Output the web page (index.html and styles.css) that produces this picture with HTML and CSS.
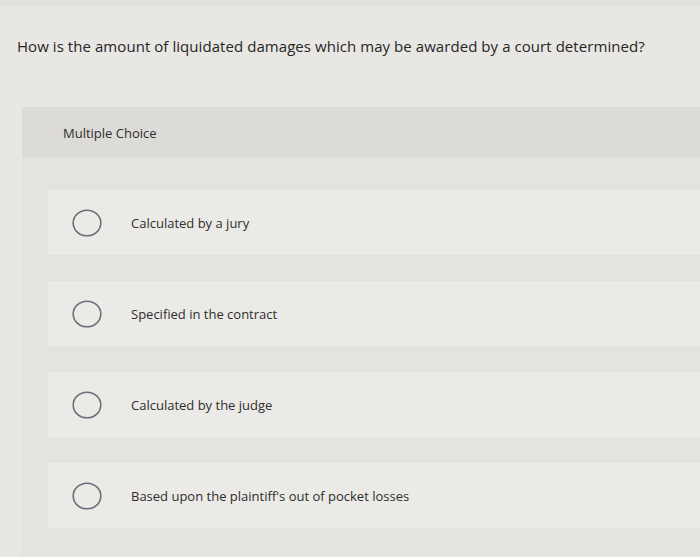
FILE: index.html
```html
<!DOCTYPE html>
<html>
<head>
<meta charset="utf-8">
<link rel="stylesheet" href="styles.css">
</head>
<body>
<div class="topstrip"></div>
<p class="question">How is the amount of liquidated damages which may be awarded by a court determined?</p>
<section class="panel">
  <div class="panel-header">Multiple Choice</div>
  <div class="options">
    <div class="option"><svg class="radio" width="30" height="28" viewBox="0 0 30 28"><ellipse cx="15" cy="14" rx="13.8" ry="12.8" fill="none" stroke="#6e6e7a" stroke-width="1.6"/></svg><span class="label">Calculated by a jury</span></div>
    <div class="option"><svg class="radio" width="30" height="28" viewBox="0 0 30 28"><ellipse cx="15" cy="14" rx="13.8" ry="12.8" fill="none" stroke="#6e6e7a" stroke-width="1.6"/></svg><span class="label">Specified in the contract</span></div>
    <div class="option"><svg class="radio" width="30" height="28" viewBox="0 0 30 28"><ellipse cx="15" cy="14" rx="13.8" ry="12.8" fill="none" stroke="#6e6e7a" stroke-width="1.6"/></svg><span class="label">Calculated by the judge</span></div>
    <div class="option"><svg class="radio" width="30" height="28" viewBox="0 0 30 28"><ellipse cx="15" cy="14" rx="13.8" ry="12.8" fill="none" stroke="#6e6e7a" stroke-width="1.6"/></svg><span class="label">Based upon the plaintiff's out of pocket losses</span></div>
  </div>
</section>
</body>
</html>
```
FILE: styles.css
```css
html, body {
  margin: 0;
  padding: 0;
  height: 100%;
  overflow: hidden;
}
body {
  background: #e8e7e3;
  font-family: "Open Sans", "Liberation Sans", sans-serif;
  color: #2c2c2c;
}
.topstrip {
  height: 6px;
  background: #e2e1dd;
}
.question {
  margin: 0;
  padding: 31px 0 0 17px;
  height: 70px;
  font-size: 15px;
  line-height: 18px;
  letter-spacing: 0.06px;
  color: #262626;
}
.panel {
  margin-left: 22px;
  background: #e4e3df;
  height: 460px;
}
.panel-header {
  height: 51px;
  display: flex;
  align-items: center;
  padding-left: 41px;
  background: #dcdbd7;
  font-size: 13px;
  color: #2e2e2e;
}
.options {
  display: flex;
  flex-direction: column;
  gap: 26px;
  padding: 32px 0 0 26px;
}
.option {
  height: 65px;
  display: flex;
  align-items: center;
  padding-left: 24px;
  background: #ebeae7;
}
.radio {
  flex: none;
}
.label {
  margin-left: 29px;
  font-size: 13px;
  color: #2e2e2e;
}
```
